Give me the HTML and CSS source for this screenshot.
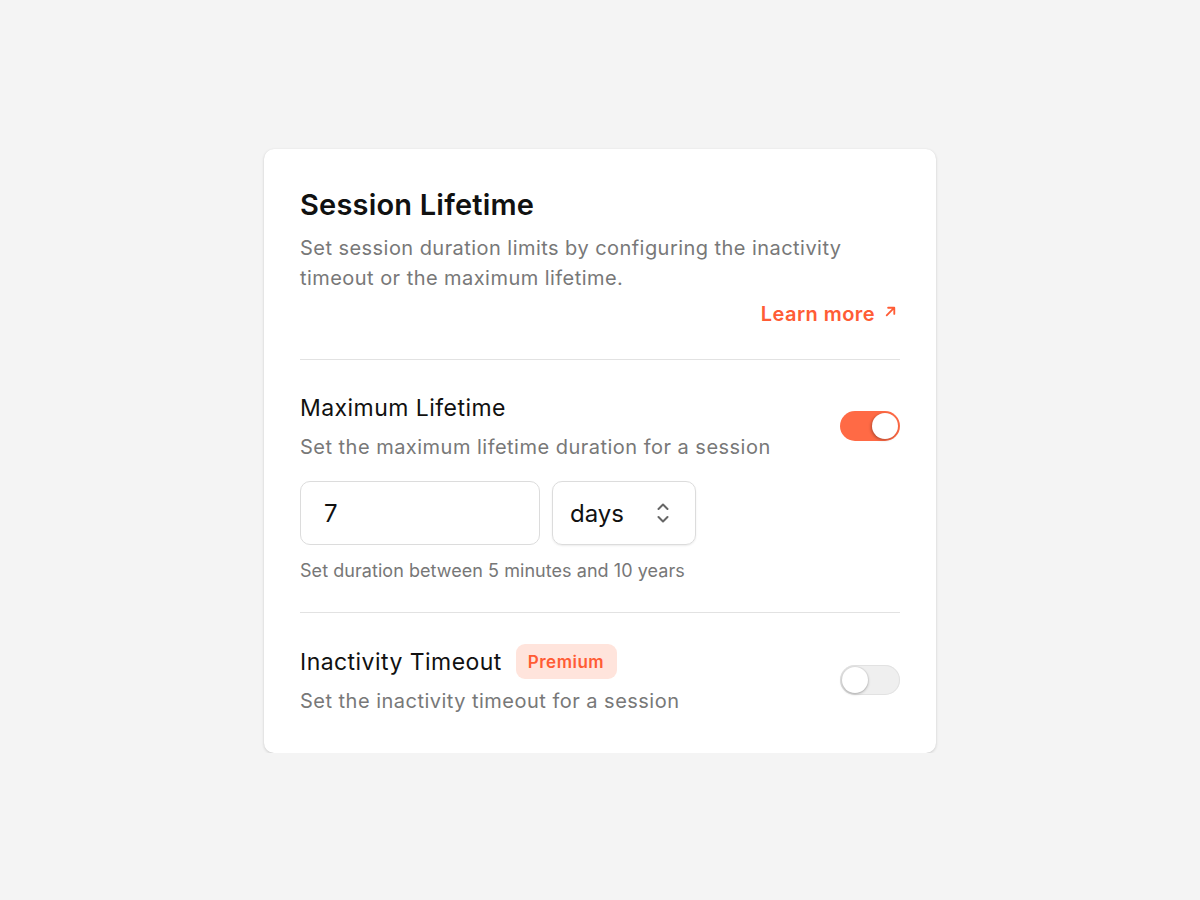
FILE: index.html
```html
<!DOCTYPE html>
<html lang="en">
<head>
<meta charset="utf-8">
<title>Session Lifetime</title>
<link rel="stylesheet" href="styles.css">
</head>
<body>
<main class="page">
  <section class="card">
    <header class="card-head">
      <h1 class="title">Session Lifetime</h1>
      <p class="desc">Set session duration limits by configuring the inactivity timeout or the maximum lifetime.</p>
      <div class="learn-row">
        <a class="learn" href="#">Learn more
          <svg class="ext" viewBox="0 0 12 12" width="13" height="13" aria-hidden="true"><path d="M2.5 9.5 L9.5 2.5 M3.8 2.5 H9.5 V8.2" fill="none" stroke="currentColor" stroke-width="1.7" stroke-linecap="round" stroke-linejoin="round"/></svg>
        </a>
      </div>
    </header>

    <div class="setting first">
      <div class="setting-top">
        <div class="setting-text">
          <div class="label-row"><span class="label">Maximum Lifetime</span></div>
          <p class="sub">Set the maximum lifetime duration for a session</p>
        </div>
        <span class="toggle on"><span class="knob"></span></span>
      </div>
      <div class="fields">
        <div class="field num">7</div>
        <div class="field sel">days
          <svg class="chev" viewBox="0 0 14 24" width="14" height="24" aria-hidden="true"><path d="M2.5 8 L7 3.5 L11.5 8 M2.5 16 L7 20.5 L11.5 16" fill="none" stroke="currentColor" stroke-width="2" stroke-linecap="round" stroke-linejoin="round"/></svg>
        </div>
      </div>
      <p class="hint">Set duration between 5 minutes and 10 years</p>
    </div>

    <div class="setting last">
      <div class="setting-top">
        <div class="setting-text">
          <div class="label-row"><span class="label">Inactivity Timeout</span><span class="badge">Premium</span></div>
          <p class="sub">Set the inactivity timeout for a session</p>
        </div>
        <span class="toggle off"><span class="knob"></span></span>
      </div>
    </div>
  </section>
</main>
</body>
</html>
```

FILE: styles.css
```css
* { box-sizing: border-box; }
html, body { margin: 0; padding: 0; }
body {
  background: #f4f4f4;
  font-family: Inter, "Noto Sans", "Liberation Sans", sans-serif;
  color: #111;
}
.page {
  display: flex;
  justify-content: center;
  padding-top: 149px;
}
.card {
  width: 672px;
  background: #fff;
  border-radius: 10px;
  box-shadow: 0 1px 3px rgba(0,0,0,0.16), 0 0 1px rgba(0,0,0,0.06);
  padding: 36px 36px 37px;
}
.card-head {
  padding-bottom: 30px;
  border-bottom: 1px solid #e2e2e2;
}
.title {
  margin: 0;
  font-size: 29px;
  line-height: 40px;
  font-weight: 600;
  color: #111;
  letter-spacing: 0.2px;
}
.desc {
  margin: 8px 0 0;
  font-size: 20px;
  line-height: 30px;
  color: #787878;
  letter-spacing: 0.45px;
}
.learn-row {
  display: flex;
  justify-content: flex-end;
  margin-top: 6px;
}
.learn {
  display: inline-flex;
  align-items: center;
  gap: 9px;
  font-size: 20px;
  line-height: 30px;
  font-weight: 600;
  color: #ff5c35;
  text-decoration: none;
  letter-spacing: 0.45px;
  margin-right: 3px;
}
.ext { margin-top: -5px; }
.setting {
  padding: 31px 0 29px;
  border-bottom: 1px solid #e2e2e2;
}
.setting.first { padding-top: 30px; padding-bottom: 28px; }
.setting.last {
  border-bottom: none;
  padding-bottom: 0;
}
.setting-top {
  display: flex;
  align-items: center;
  justify-content: space-between;
}
.label-row {
  display: flex;
  align-items: center;
  gap: 14px;
  min-height: 35px;
}
.label {
  font-size: 23px;
  line-height: 32px;
  color: #111;
  letter-spacing: 0.45px;
}
.badge {
  display: inline-flex;
  align-items: center;
  height: 35px;
  padding: 0 13px 0 12px;
  border-radius: 9px;
  background: #ffe4dc;
  color: #ff5c35;
  font-size: 17px;
  font-weight: 600;
  letter-spacing: 0.5px;
}
.sub {
  margin: 7px 0 0;
  font-size: 20px;
  line-height: 30px;
  color: #787878;
  letter-spacing: 0.48px;
}
.toggle {
  flex: none;
  width: 60px;
  height: 30px;
  border-radius: 15px;
  padding: 2px;
  display: flex;
}
.toggle .knob {
  width: 26px;
  height: 26px;
  border-radius: 50%;
  background: #fff;
  box-shadow: -1px 1px 3px rgba(0,0,0,0.3);
}
.toggle.on {
  background: #ff6a45;
  justify-content: flex-end;
}
.toggle.off {
  background: #efefef;
  box-shadow: inset 0 0 0 1px #e2e2e2;
  justify-content: flex-start;
}
.toggle.off .knob {
  box-shadow: 0 1px 3px rgba(0,0,0,0.28), 0 0 0 1px rgba(0,0,0,0.04);
}
.fields {
  display: flex;
  gap: 12px;
  margin-top: 19px;
}
.field {
  height: 64px;
  border: 1px solid #dcdcdc;
  border-radius: 10px;
  display: flex;
  align-items: center;
  font-size: 24px;
  color: #111;
}
.field.num {
  width: 240px;
  padding-left: 23px;
}
.field.sel {
  width: 144px;
  padding: 0 25px 0 17px;
  justify-content: space-between;
  box-shadow: 0 1px 2px rgba(0,0,0,0.08);
}
.chev { color: #666; }
.hint {
  margin: 12px 0 0;
  font-size: 18px;
  line-height: 27px;
  color: #777;
  letter-spacing: 0.05px;
}
```
